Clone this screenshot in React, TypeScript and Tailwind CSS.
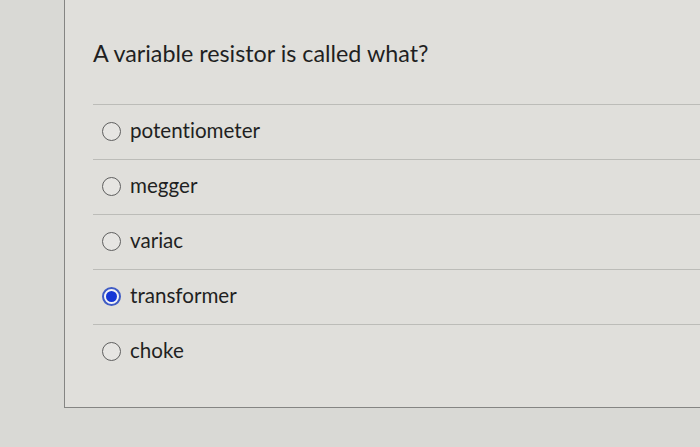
import * as React from "react";

type Option = {
  label: string;
  selected?: boolean;
};

const options: Option[] = [
  { label: "potentiometer" },
  { label: "megger" },
  { label: "variac" },
  { label: "transformer", selected: true },
  { label: "choke" },
];

function Radio({ selected }: { selected?: boolean }) {
  if (selected) {
    return (
      <span className="flex h-[19px] w-[19px] shrink-0 items-center justify-center rounded-full border-2 border-[#3f5bc4] bg-[#f4f4f6]">
        <span className="h-[11px] w-[11px] rounded-full bg-[#1637d6]" />
      </span>
    );
  }
  return (
    <span className="h-[19px] w-[19px] shrink-0 rounded-full border-[1.5px] border-[#5f5f5f] bg-[#e6e5e2]" />
  );
}

export default function App() {
  return (
    <div
      className="h-[447px] w-[700px] overflow-hidden bg-[#d9d9d5] [font-variant-ligatures:none]"
      style={{ fontFamily: "Lato, 'Noto Sans', sans-serif" }}
    >
      <div className="ml-[64px] h-[408px] border-b-[1.5px] border-l-[1.5px] border-[#858583] bg-[#e0dfdb] pl-[28px]">
        <h1 className="pt-[39px] text-[23.3px] leading-[28px] font-normal text-[#1f1f22]">
          A variable resistor is called what?
        </h1>

        <div className="mt-[37px]">
          {options.map((opt) => (
            <div
              key={opt.label}
              className="flex h-[55px] items-center gap-[9px] border-t border-[#bcbcb8] pb-[1px] pl-[9px]"
            >
              <Radio selected={opt.selected} />
              <span className="-mt-[3px] text-[20.6px] leading-[24px] text-[#1f1f22]">
                {opt.label}
              </span>
            </div>
          ))}
        </div>
      </div>
    </div>
  );
}
